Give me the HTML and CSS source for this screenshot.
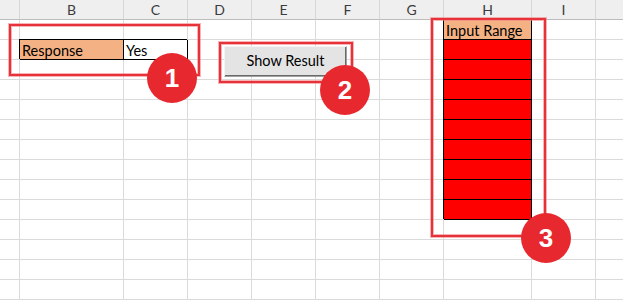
FILE: index.html
```html
<!DOCTYPE html>
<html>
<head>
<meta charset="utf-8">
<link rel="stylesheet" href="styles.css">
</head>
<body>
<div class="sheet">
  <div class="grid">
    <div class="hd"></div><div class="hd">B</div><div class="hd">C</div><div class="hd">D</div><div class="hd">E</div><div class="hd">F</div><div class="hd">G</div><div class="hd">H</div><div class="hd">I</div><div class="hd"></div>

    <div class="c"></div><div class="c"></div><div class="c"></div><div class="c"></div><div class="c"></div><div class="c"></div><div class="c"></div><div class="c peach bx">Input Range</div><div class="c"></div><div class="c"></div>

    <div class="c"></div><div class="c peach bx">Response</div><div class="c bx">Yes</div><div class="c"></div><div class="c"></div><div class="c"></div><div class="c"></div><div class="c red bx"></div><div class="c"></div><div class="c"></div>

    <div class="c"></div><div class="c"></div><div class="c"></div><div class="c"></div><div class="c"></div><div class="c"></div><div class="c"></div><div class="c red bx"></div><div class="c"></div><div class="c"></div>
    <div class="c"></div><div class="c"></div><div class="c"></div><div class="c"></div><div class="c"></div><div class="c"></div><div class="c"></div><div class="c red bx"></div><div class="c"></div><div class="c"></div>
    <div class="c"></div><div class="c"></div><div class="c"></div><div class="c"></div><div class="c"></div><div class="c"></div><div class="c"></div><div class="c red bx"></div><div class="c"></div><div class="c"></div>
    <div class="c"></div><div class="c"></div><div class="c"></div><div class="c"></div><div class="c"></div><div class="c"></div><div class="c"></div><div class="c red bx"></div><div class="c"></div><div class="c"></div>
    <div class="c"></div><div class="c"></div><div class="c"></div><div class="c"></div><div class="c"></div><div class="c"></div><div class="c"></div><div class="c red bx"></div><div class="c"></div><div class="c"></div>
    <div class="c"></div><div class="c"></div><div class="c"></div><div class="c"></div><div class="c"></div><div class="c"></div><div class="c"></div><div class="c red bx"></div><div class="c"></div><div class="c"></div>
    <div class="c"></div><div class="c"></div><div class="c"></div><div class="c"></div><div class="c"></div><div class="c"></div><div class="c"></div><div class="c red bx"></div><div class="c"></div><div class="c"></div>
    <div class="c"></div><div class="c"></div><div class="c"></div><div class="c"></div><div class="c"></div><div class="c"></div><div class="c"></div><div class="c red bx"></div><div class="c"></div><div class="c"></div>
    <div class="c"></div><div class="c"></div><div class="c"></div><div class="c"></div><div class="c"></div><div class="c"></div><div class="c"></div><div class="c"></div><div class="c"></div><div class="c"></div>
    <div class="c"></div><div class="c"></div><div class="c"></div><div class="c"></div><div class="c"></div><div class="c"></div><div class="c"></div><div class="c"></div><div class="c"></div><div class="c"></div>
    <div class="c"></div><div class="c"></div><div class="c"></div><div class="c"></div><div class="c"></div><div class="c"></div><div class="c"></div><div class="c"></div><div class="c"></div><div class="c"></div>
    <div class="c"></div><div class="c"></div><div class="c"></div><div class="c"></div><div class="c"></div><div class="c"></div><div class="c"></div><div class="c"></div><div class="c"></div><div class="c"></div>
  </div>

  <button class="btn">Show Result</button>

  <div class="mark mark1"></div>
  <div class="mark mark2"></div>
  <div class="mark mark3"></div>

  <div class="badge badge1">1</div>
  <div class="badge badge2">2</div>
  <div class="badge badge3">3</div>
</div>
</body>
</html>
```

FILE: styles.css
```css
html, body {
  margin: 0;
  padding: 0;
  background: #ffffff;
}

.sheet {
  position: relative;
  width: 623px;
  height: 306px;
  overflow: hidden;
  font-family: Lato, "Liberation Sans", sans-serif;
}

.grid {
  display: grid;
  grid-template-columns: 20px 104px 64px 64px 64px 64px 64px 88px 64px 40px;
  grid-template-rows: 20px repeat(15, 20px);
}

.hd {
  box-sizing: border-box;
  background: #efefef;
  border-right: 1px solid #d6d6d6;
  border-bottom: 1px solid #bcbcbc;
  color: #3c3c3c;
  font-size: 14px;
  line-height: 20px;
  text-align: center;
}

.c {
  box-sizing: border-box;
  border-right: 1px solid #dadada;
  border-bottom: 1px solid #dadada;
  font-size: 14.5px;
  line-height: 20px;
  padding: 1px 0 0 2px;
  color: #000;
  white-space: nowrap;
  overflow: visible;
}

.bx {
  border-right-color: #000;
  border-bottom-color: #000;
  box-shadow: -1px -1px 0 0 #000;
}

.peach {
  background: #f4b183;
}

.red {
  background: #ff0000;
}

.btn {
  position: absolute;
  left: 224px;
  top: 46px;
  width: 123px;
  height: 31px;
  box-sizing: border-box;
  background: #e4e4e4;
  border-top: 1px solid #f4f4f4;
  border-left: 1px solid #f4f4f4;
  border-right: 1px solid #a0a0a0;
  border-bottom: 1px solid #a0a0a0;
  box-shadow: inset -1px -1px 0 #6a6a6a;
  font-family: Lato, "Liberation Sans", sans-serif;
  font-size: 14.5px;
  color: #000;
  padding: 0 0 2px 0;
}

.mark {
  position: absolute;
  box-sizing: border-box;
  border: 2px solid #e63238;
  box-shadow: 0 0 0 1px rgba(240, 130, 135, 0.6), inset 0 0 0 1px rgba(240, 130, 135, 0.6);
}

.mark1 { left: 9px; top: 24px; width: 191px; height: 52px; }
.mark2 { left: 219px; top: 42px; width: 134px; height: 41px; }
.mark3 { left: 431px; top: 18px; width: 115px; height: 219px; }

.badge {
  position: absolute;
  width: 50px;
  height: 50px;
  border-radius: 50%;
  background: #e8282f;
  color: #ffffff;
  font-family: "Liberation Sans", Arial, sans-serif;
  font-weight: bold;
  font-size: 26px;
  line-height: 50px;
  text-align: center;
}

.badge1 { left: 147px; top: 53px; }
.badge2 { left: 320px; top: 65px; }
.badge3 { left: 521px; top: 213px; }
```
